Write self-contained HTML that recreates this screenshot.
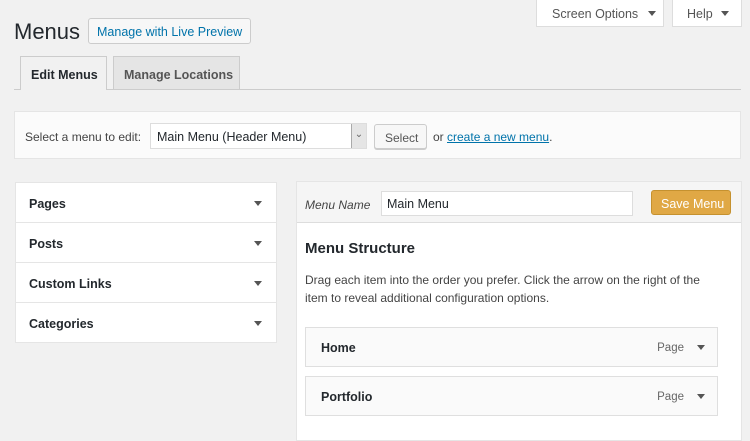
<!DOCTYPE html>
<html><head><style>
*{box-sizing:border-box;margin:0;padding:0}
body{width:750px;height:422px;overflow:hidden;background:#f1f1f1;font-family:"Liberation Sans",sans-serif;color:#23282d;position:relative;font-size:12px}
.a{position:absolute}
.tri{display:inline-block;width:0;height:0;border-left:4px solid transparent;border-right:4px solid transparent;border-top:5px solid #555}
.btn{background:#f7f7f7;border:1px solid #ccc;border-radius:3px;box-shadow:0 1px 0 #ccc}
.row{position:absolute;left:0;width:100%;height:40px;border-bottom:1px solid #e5e5e5;font-weight:bold;font-size:12.5px;padding:14px 0 0 13px;color:#23282d}
.row .tri{position:absolute;right:14px;top:18px}
.item{position:absolute;left:305px;width:413px;height:40px;background:#fafafa;border:1px solid #dfdfdf;font-weight:bold;font-size:12.5px;padding:13px 0 0 15px}
.item .pg{position:absolute;right:33px;top:14px;font-weight:normal;font-size:11.5px;color:#666}
.item .tri{position:absolute;right:12px;top:17px}
</style></head><body>
<div class="a" style="left:536px;top:-1px;width:128px;height:28px;background:#fff;border:1px solid #ddd;border-top:none;font-size:12.5px;color:#555;padding:8px 0 0 15px">Screen Options <span class="tri" style="margin-left:6px;vertical-align:2px"></span></div>
<div class="a" style="left:672px;top:-1px;width:70px;height:28px;background:#fff;border:1px solid #ddd;border-top:none;font-size:12.5px;color:#555;padding:8px 0 0 14px">Help <span class="tri" style="margin-left:5px;vertical-align:2px"></span></div>
<div class="a" style="left:14px;top:19px;font-size:22px;color:#23282d">Menus</div>
<div class="a btn" style="left:88px;top:18px;width:163px;height:26px;border-color:#ccc;background:#f7f7f7;color:#0073aa;font-size:12.5px;padding:6px 0 0 8px;box-shadow:none">Manage with Live Preview</div>
<div class="a" style="left:14px;top:89px;width:727px;height:1px;background:#ccc"></div>
<div class="a" style="left:20px;top:56px;width:87px;height:34px;background:#f1f1f1;border:1px solid #ccc;border-bottom:none;font-weight:bold;font-size:12.5px;padding:11px 0 0 10px">Edit Menus</div>
<div class="a" style="left:113px;top:56px;width:127px;height:33px;background:#e5e5e5;border:1px solid #ccc;border-bottom:none;font-weight:bold;font-size:12.5px;color:#555;padding:11px 0 0 10px">Manage Locations</div>
<div class="a" style="left:14px;top:111px;width:727px;height:48px;background:#fbfbfb;border:1px solid #e5e5e5"></div>
<div class="a" style="left:25px;top:130px;font-size:12px;color:#444">Select a menu to edit:</div>
<div class="a" style="left:150px;top:123px;width:217px;height:26px;background:#fff;border:1px solid #ddd;font-size:12.5px;padding:6px 0 0 6px">Main Menu (Header Menu)</div>
<div class="a" style="left:351px;top:124px;width:15px;height:24px;background:#e5e5e5;border-left:1px solid #aaa;color:#666;font-size:10px;text-align:center;padding-top:5px">⌄</div>
<div class="a btn" style="left:374px;top:124px;width:53px;height:25px;font-size:12px;color:#555;padding:6px 0 0 10px">Select</div>
<div class="a" style="left:433px;top:130px;font-size:12px;color:#444">or <span style="color:#0073aa;text-decoration:underline">create a new menu</span>.</div>
<div class="a" style="left:15px;top:182px;width:262px;height:161px;background:#fff;border:1px solid #e5e5e5">
<div class="row" style="top:0">Pages<span class="tri"></span></div>
<div class="row" style="top:40px">Posts<span class="tri"></span></div>
<div class="row" style="top:80px">Custom Links<span class="tri"></span></div>
<div class="row" style="top:120px;border:none">Categories<span class="tri"></span></div>
</div>
<div class="a" style="left:296px;top:181px;width:446px;height:260px;background:#fff;border:1px solid #e5e5e5"></div>
<div class="a" style="left:297px;top:182px;width:444px;height:41px;background:#f5f5f5;border-bottom:1px solid #ddd"></div>
<div class="a" style="left:305px;top:198px;font-style:italic;font-size:12px;color:#444">Menu Name</div>
<div class="a" style="left:381px;top:191px;width:252px;height:25px;background:#fff;border:1px solid #ddd;font-size:12.5px;padding:5px 0 0 5px">Main Menu</div>
<div class="a" style="left:651px;top:190px;width:80px;height:25px;background:#e0a845;border:1px solid #c5912f;border-radius:3px;color:#fff;font-size:12.5px;padding:6px 0 0 9px">Save Menu</div>
<div class="a" style="left:305px;top:240px;font-size:15px;font-weight:bold;color:#23282d">Menu Structure</div>
<div class="a" style="left:305px;top:271px;width:420px;font-size:12px;line-height:18px;color:#444">Drag each item into the order you prefer. Click the arrow on the right of the item to reveal additional configuration options.</div>
<div class="item" style="top:327px">Home<span class="pg">Page</span><span class="tri"></span></div>
<div class="item" style="top:376px">Portfolio<span class="pg">Page</span><span class="tri"></span></div>
</body></html>
